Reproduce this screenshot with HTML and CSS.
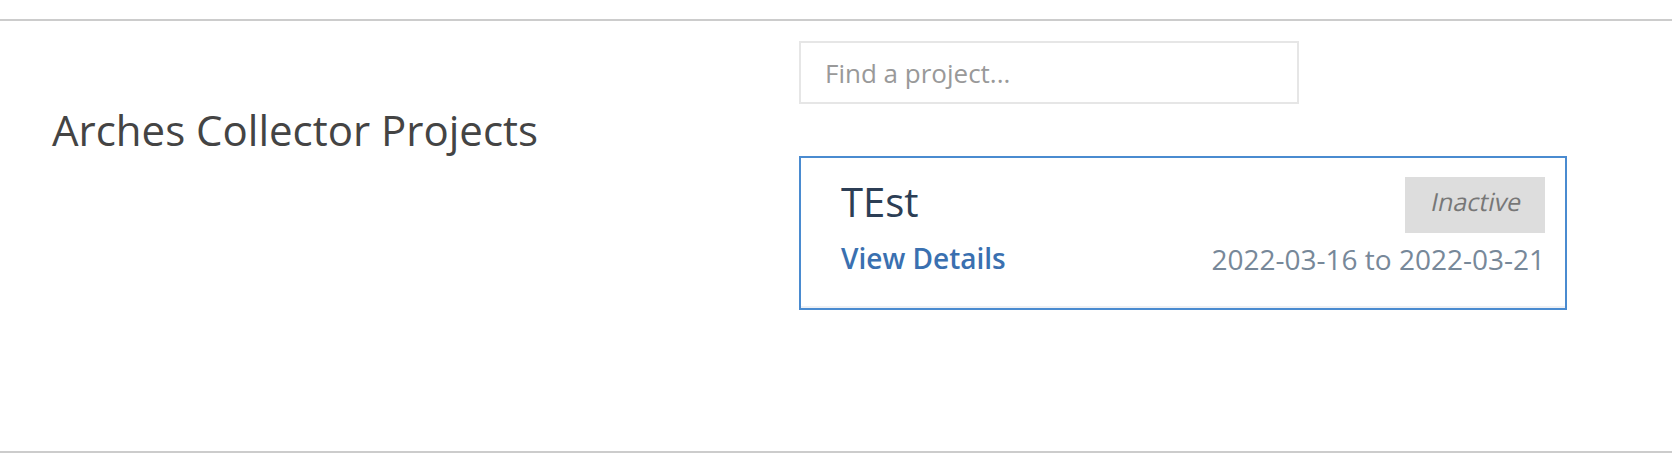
FILE: index.html
```html
<!DOCTYPE html>
<html>
<head>
<meta charset="utf-8">
<link rel="stylesheet" href="styles.css">
</head>
<body>
<div class="topbar"></div>
<main class="page">
  <section class="intro">
    <h1 class="title">Arches Collector Projects</h1>
  </section>
  <section class="projects">
    <input class="search" type="text" placeholder="Find a project...">
    <div class="card">
      <div class="card-main">
        <div class="card-name">TEst</div>
        <a class="card-link" href="#">View Details</a>
      </div>
      <div class="card-side">
        <span class="badge"><span class="badge-text">Inactive</span></span>
        <div class="dates">2022-03-16 to 2022-03-21</div>
      </div>
    </div>
  </section>
</main>
<div class="bottombar"></div>
</body>
</html>
```
FILE: styles.css
```css
html, body {
  margin: 0;
  padding: 0;
  background: #fff;
  font-family: "Open Sans", "Noto Sans", sans-serif;
}
.topbar {
  height: 19px;
  border-bottom: 2px solid #cccccc;
}
.page {
  display: flex;
  height: 430px;
}
.intro {
  width: 799px;
  box-sizing: border-box;
  padding-left: 52px;
  padding-top: 80px;
}
.title {
  margin: 0;
  font-size: 42px;
  font-weight: 400;
  line-height: normal;
  color: #444444;
}
.projects {
  padding-top: 20px;
  display: flex;
  flex-direction: column;
  align-items: flex-start;
}
.search {
  width: 500px;
  height: 63px;
  box-sizing: border-box;
  border: 2px solid #e6e6e6;
  padding: 0 24px;
  font-family: "Open Sans", sans-serif;
  font-size: 26px;
  color: #333;
  outline: none;
  margin: 0;
}
.search::placeholder {
  color: #999;
}
.card {
  margin-top: 52px;
  width: 768px;
  box-sizing: border-box;
  border: 2px solid #4a8bd0;
  padding: 16px 20px 30px 40px;
  display: flex;
  justify-content: space-between;
  box-shadow: inset 0 -2px 0 #eef0f4;
}
.card-main {
  display: flex;
  flex-direction: column;
  align-items: flex-start;
}
.card-name {
  font-size: 40px;
  line-height: normal;
  color: #2c3e55;
}
.card-link {
  margin-top: 10px;
  font-size: 28px;
  font-weight: 600;
  line-height: normal;
  color: #3a70b0;
  text-decoration: none;
}
.card-side {
  margin-top: 3px;
  display: flex;
  flex-direction: column;
  align-items: flex-end;
}
.badge {
  width: 140px;
  height: 56px;
  box-sizing: border-box;
  padding-top: 7px;
  padding-left: 4px;
  text-align: center;
  background: #dddddd;
  font-size: 25px;
  line-height: normal;
  color: #777;
}
.badge-text {
  display: inline-block;
  transform: skewX(-12deg);
}
.dates {
  margin-top: 7px;
  font-size: 28px;
  line-height: normal;
  color: #778899;
}
.bottombar {
  border-top: 2px solid #cccccc;
}
```
